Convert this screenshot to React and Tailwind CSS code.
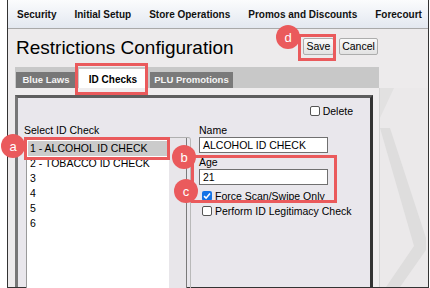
import React from "react";

const items = ["1 - ALCOHOL ID CHECK", "2 - TOBACCO ID CHECK", "3", "4", "5", "6"];
const navItems = ["Security", "Initial Setup", "Store Operations", "Promos and Discounts", "Forecourt"];

function Box({ checked }) {
  if (checked) {
    return (
      <span className="flex w-[10px] h-[10px] shrink-0 items-center justify-center rounded-[2px] bg-[#1473e6]">
        <svg width="8" height="8" viewBox="0 0 8 8">
          <path d="M1 4.2 L3.1 6.2 L7 1.6" fill="none" stroke="white" strokeWidth="1.6" />
        </svg>
      </span>
    );
  }
  return <span className="block w-[10px] h-[10px] shrink-0 rounded-[2px] border border-[#555] bg-white" />;
}

function Badge({ letter, className }) {
  return (
    <div
      className={`absolute flex w-[24px] h-[24px] items-center justify-center rounded-full bg-[#ea5a5c] text-[13px] leading-none text-white ${className}`}
    >
      {letter}
    </div>
  );
}

export default function App() {
  return (
    <div className="relative w-[430px] h-[288px] overflow-hidden bg-white font-['Liberation_Sans',Arial,sans-serif] text-black">
      <div className="ml-[7px] flex w-[422px] h-[288px] flex-col border-x border-b border-[#333] bg-[#edebec]">
        {/* top nav */}
        <div className="flex h-[29px] shrink-0 items-center gap-[18px] border-b border-[#a9a9a9] bg-linear-to-b from-[#fbfcfd] to-[#e3e8f0] pl-[9px] text-[10px] font-bold text-[#111]">
          {navItems.map((n) => (
            <span key={n}>{n}</span>
          ))}
        </div>

        <div className="flex min-h-0 flex-1">
          <div className="flex w-[371px] flex-col pl-[7px]">
            {/* title + buttons */}
            <div className="flex h-[38px] shrink-0 items-start justify-between pr-[1px]">
              <h1 className="mt-[8px] ml-[1px] text-[19px] leading-[22px]">Restrictions Configuration</h1>
              <div className="mt-[9px] flex gap-[5px]">
                <button className="h-[17px] w-[31px] rounded-[2px] border border-[#adadad] bg-linear-to-b from-[#fafafa] to-[#e2e2e2] text-[10.5px] leading-none">
                  Save
                </button>
                <button className="h-[17px] w-[39px] rounded-[2px] border border-[#adadad] bg-linear-to-b from-[#fafafa] to-[#e2e2e2] text-[10.5px] leading-none">
                  Cancel
                </button>
              </div>
            </div>

            {/* tabs */}
            <div className="flex h-[21px] shrink-0 items-end gap-[3px] bg-[#c8c8c8] pl-[1px] text-[10px] font-bold">
              <div className="flex h-[16px] w-[60px] items-center justify-center bg-[#777] text-[9.5px] text-[#f4f4f4]">
                Blue Laws
              </div>
              <div className="-mb-[2px] flex h-[21px] w-[68px] items-center justify-center bg-white">ID Checks</div>
              <div className="flex h-[16px] w-[83px] items-center justify-center bg-[#7a7a7a] text-[9.5px] text-[#f4f4f4]">
                PLU Promotions
              </div>
            </div>

            {/* panel */}
            <div className="min-h-0 flex-1 bg-[#efedee] pt-[7px] pr-[6px]">
              <div className="h-full border-x-[3px] border-t-[3px] border-t-[#5e5e5e] border-l-[#777] border-r-[#333] bg-[#e9e7ec] text-[10.5px] leading-[12px]">
                <div className="flex items-center justify-end gap-[3px] pt-[7px] pr-[17px]">
                  <Box />
                  <span>Delete</span>
                </div>

                <div className="mt-[7px] flex">
                  <div className="w-[181px] pl-[6px]">
                    <div>Select ID Check</div>
                    <div className="mt-[1px] ml-[2px] flex h-[160px] w-[165px] rounded-tr-[3px] border-x border-t border-l-[#9a9a9a] border-t-[#b0b0b0] border-r-[#b9b9b9] pr-[3px]">
                      <div className="flex flex-1 border-r border-[#7a7a7a]">
                        <div className="w-[142px] bg-white px-[1px] pt-[3px]">
                          {items.map((it, i) => (
                            <div
                              key={it}
                              className={`h-[15px] pl-[2px] leading-[15px] ${i === 0 ? "bg-[#cbcbcb]" : ""}`}
                            >
                              {it}
                            </div>
                          ))}
                        </div>
                        <div className="flex-1 bg-[#e8e6ea]" />
                      </div>
                    </div>
                  </div>

                  <div className="w-[129px]">
                    <div>Name</div>
                    <div className="mt-[1px] h-[16px] border border-[#707070] bg-white pl-[3px] leading-[14px]">
                      ALCOHOL ID CHECK
                    </div>
                    <div className="mt-[3px]">Age</div>
                    <div className="mt-[1px] h-[16px] border border-[#707070] bg-white pl-[3px] leading-[14px]">21</div>
                    <div className="mt-[5px] flex h-[12px] items-center gap-[3px] pl-[3px]">
                      <Box checked />
                      <span>Force Scan/Swipe Only</span>
                    </div>
                    <div className="mt-[3px] flex h-[12px] items-center gap-[3px] pl-[3px]">
                      <Box />
                      <span className="whitespace-nowrap">Perform ID Legitimacy Check</span>
                    </div>
                  </div>
                </div>
              </div>
            </div>
          </div>

          {/* decorative right strip */}
          <div className="flex flex-1 flex-col">
            <div className="h-[59px] shrink-0" />
            <div className="relative flex-1 overflow-hidden border-l border-[#d6d6d6] bg-[#ebe9ea]">
              <svg className="absolute inset-0" width="48" height="199" viewBox="0 0 48 199">
                <path d="M0 40 L10 40 L46 150 L46 162 L20 199 L6 199 L34 158 Z" fill="#dedddd" />
                <path d="M0 0 L14 0 L0 30 Z" fill="#e2e1e1" />
              </svg>
            </div>
          </div>
        </div>
      </div>

      {/* annotations */}
      <div className="absolute left-[75px] top-[63px] h-[32px] w-[73px] border-[3px] border-[#ea5a5c]" />
      <div className="absolute left-[298px] top-[34px] h-[27px] w-[38px] border-[3px] border-[#ea5a5c]" />
      <div className="absolute left-[24px] top-[137px] h-[23px] w-[146px] border-[3px] border-[#ea5a5c]" />
      <div className="absolute left-[191px] top-[155px] h-[48px] w-[146px] border-[3px] border-[#ea5a5c]" />
      <Badge letter="d" className="left-[276px] top-[25px]" />
      <Badge letter="a" className="left-[1px] top-[134px]" />
      <Badge letter="b" className="left-[172px] top-[145px]" />
      <Badge letter="c" className="left-[174px] top-[179px]" />
    </div>
  );
}
